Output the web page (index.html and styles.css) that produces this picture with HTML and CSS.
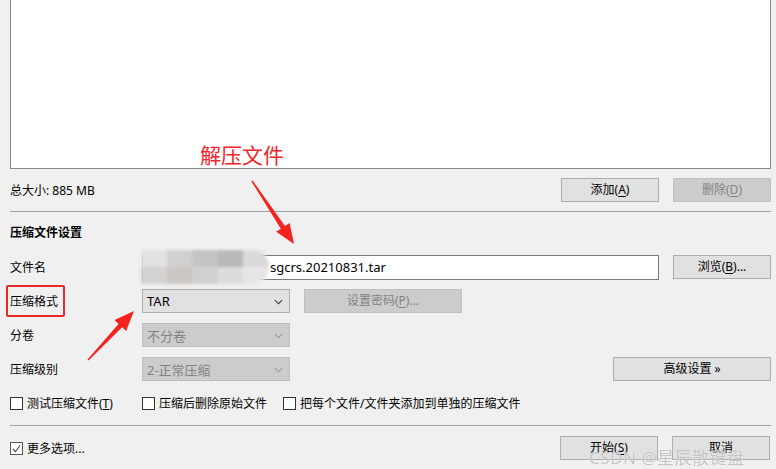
FILE: index.html
```html
<!DOCTYPE html>
<html lang="zh-CN">
<head>
    <meta charset="UTF-8">
    <title>压缩文件</title>
    <link rel="stylesheet" href="styles.css">
</head>
<body>
    <div class="dialog">
        <div class="file-list"></div>

        <div class="summary">
            <span>总大小: 885 MB</span>
            <div class="btn-group">
                <button class="btn">添加(<u>A</u>)</button>
                <button class="btn" disabled>删除(<u>D</u>)</button>
            </div>
        </div>

        <hr class="sep">

        <div class="section-title">压缩文件设置</div>

        <div class="form">
            <label class="label">文件名</label>
            <div class="control">
                <div class="name-input">
                    <div class="mosaic">
                        <span style="background:#e2e2e2"></span><span style="background:#d0d0d0"></span><span style="background:#c4c4c4"></span><span style="background:#b9b9b9"></span><span style="background:#dadada"></span><span style="background:#d2d2d2"></span><span style="background:#cdc7c3"></span><span style="background:#d0d0d0"></span><span style="background:#dcdcdc"></span><span style="background:#e6e6e6"></span>
                    </div>
                    <span class="name-text">sgcrs.20210831.tar</span>
                </div>
                <button class="btn">浏览(<u>B</u>)...</button>
            </div>

            <label class="label">压缩格式</label>
            <div class="control">
                <div class="select">TAR<svg class="chev" viewBox="0 0 10 6"><path d="M1 1l4 4 4-4" /></svg></div>
                <button class="btn btn-wide" disabled>设置密码(<u>P</u>)...</button>
            </div>

            <label class="label">分卷</label>
            <div class="control">
                <div class="select disabled">不分卷<svg class="chev" viewBox="0 0 10 6"><path d="M1 1l4 4 4-4" /></svg></div>
            </div>

            <label class="label">压缩级别</label>
            <div class="control spread">
                <div class="select disabled">2-正常压缩<svg class="chev" viewBox="0 0 10 6"><path d="M1 1l4 4 4-4" /></svg></div>
                <button class="btn btn-wide">高级设置 »</button>
            </div>

            <div class="checks">
                <label class="check c1"><span class="box"></span><span>测试压缩文件(<u>T</u>)</span></label>
                <label class="check c2"><span class="box"></span><span>压缩后删除原始文件</span></label>
                <label class="check"><span class="box"></span><span>把每个文件/文件夹添加到单独的压缩文件</span></label>
            </div>
        </div>

        <hr class="sep sep-bottom">

        <div class="footer">
            <label class="check"><span class="box checked"><svg viewBox="0 0 12 12"><path d="M2 6.5l2.8 3L10 2.5" /></svg></span><span>更多选项...</span></label>
            <div class="btn-group btn-group-footer">
                <button class="btn">开始(<u>S</u>)</button>
                <button class="btn">取消</button>
            </div>
        </div>
    </div>

    <!-- пометки поверх окна -->
    <div class="note">解压文件</div>
    <div class="mark-box"></div>
    <svg class="arrows" viewBox="0 0 776 469">
        <polygon points="252.6,180.6 285,226 289.6,223 294,244 276.2,231.8 280.8,228.8 251.4,181.4" />
        <polygon points="88.5,360.5 122.1,327.3 126.1,331.1 134,311 114.5,320.1 118.5,323.9 87.5,359.5" />
    </svg>
    <div class="watermark">CSDN @星辰散键盘</div>
</body>
</html>
```

FILE: styles.css
```css
body {
    margin: 0;
    background-color: #f0f0f0;
    font-family: "Noto Sans", "Noto Sans CJK SC", sans-serif;
    font-size: 12px;
    color: #000;
    width: 776px;
    height: 469px;
    overflow: hidden;
    position: relative;
}
.dialog {
    padding: 0 5px 0 10px;
}
.file-list {
    height: 168px;
    background: #fff;
    border: 1px solid #828790;
    border-top: none;
}
.summary {
    display: flex;
    justify-content: space-between;
    align-items: center;
    margin-top: 9px;
    height: 24px;
}
.btn-group {
    display: flex;
    gap: 14px;
}
.btn {
    font-family: inherit;
    font-size: 12px;
    color: #000;
    background: #e1e1e1;
    border: 1px solid #adadad;
    width: 98px;
    height: 24px;
    padding: 0;
    line-height: 20px;
}
.btn u {
    text-underline-offset: 2px;
}
.btn:disabled {
    background: #cccccc;
    border-color: #bfbfbf;
    color: #838383;
}
.btn-wide {
    width: 158px;
}
.sep {
    border: none;
    border-top: 1px solid #a0a0a0;
    margin: 9px 0 0;
}
.section-title {
    font-weight: bold;
    line-height: 18px;
    margin-top: 12px;
}
.form {
    display: grid;
    grid-template-columns: 132px 1fr;
    grid-auto-rows: 34px;
    margin-top: 8px;
}
.label {
    display: flex;
    align-items: center;
}
.control {
    display: flex;
    align-items: center;
    gap: 14px;
}
.control.spread {
    justify-content: space-between;
}
.name-input {
    position: relative;
    width: 517px;
    height: 25px;
    box-sizing: border-box;
    background: #fff;
    border: 1px solid #7a7a7a;
    display: flex;
    align-items: center;
}
.name-text {
    margin-left: 127px;
    font-size: 13px;
}
.mosaic {
    position: absolute;
    left: -2px;
    top: -6px;
    width: 128px;
    height: 34px;
    display: grid;
    grid-template-columns: repeat(5, 1fr);
    border-radius: 0 16px 16px 0;
    overflow: hidden;
    filter: blur(1.5px);
}
.select {
    position: relative;
    width: 148px;
    height: 24px;
    box-sizing: border-box;
    background: #e1e1e1;
    border: 1px solid #adadad;
    padding-left: 4px;
    display: flex;
    align-items: center;
    font-size: 13px;
}
.select.disabled {
    background: #cccccc;
    border-color: #bfbfbf;
    color: #838383;
}
.chev {
    position: absolute;
    right: 6px;
    top: 9px;
    width: 9px;
    height: 6px;
    fill: none;
    stroke: #333;
    stroke-width: 1.2;
}
.select.disabled .chev {
    stroke: #9a9a9a;
}
.checks {
    grid-column: 1 / 3;
    display: flex;
    align-items: center;
}
.check {
    display: flex;
    align-items: center;
    gap: 4px;
}
.c1 {
    width: 132px;
}
.c2 {
    width: 141px;
}
.box {
    width: 13px;
    height: 13px;
    box-sizing: border-box;
    border: 1px solid #333;
    background: #fff;
    display: flex;
}
.box.checked {
    border-color: #555;
}
.box svg {
    width: 11px;
    height: 11px;
    fill: none;
    stroke: #444;
    stroke-width: 1.2;
}
.sep-bottom {
    margin-top: 5px;
}
.footer {
    display: flex;
    justify-content: space-between;
    align-items: center;
    margin-top: 10px;
    height: 24px;
}
.btn-group-footer {
    margin-right: 1px;
}
.note {
    position: absolute;
    left: 200px;
    top: 139px;
    font-size: 21px;
    color: #f5242a;
    font-family: "Noto Sans CJK SC", sans-serif;
}
.mark-box {
    position: absolute;
    left: 6px;
    top: 285px;
    width: 59px;
    height: 32px;
    box-sizing: border-box;
    border: 2px solid #e92828;
    border-radius: 2px;
}
.arrows {
    position: absolute;
    left: 0;
    top: 0;
    width: 776px;
    height: 469px;
    fill: #f5231f;
    pointer-events: none;
}
.watermark {
    position: absolute;
    left: 589px;
    top: 444px;
    font-size: 17px;
    color: rgba(150, 150, 150, 0.55);
    text-shadow: 0 0 1px #fff;
    letter-spacing: 0.5px;
    white-space: nowrap;
}
```
